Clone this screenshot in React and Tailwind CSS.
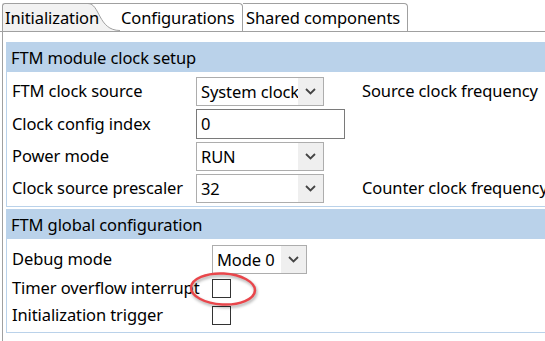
import React from 'react';

const font = { fontFamily: '"Noto Sans", "Open Sans", sans-serif' };

function Chevron() {
  return (
    <svg width="11" height="7" viewBox="0 0 11 7" fill="none">
      <path d="M1 1l4.5 4.5L10 1" stroke="#444" strokeWidth="1.8" />
    </svg>
  );
}

function Combo({ value, width }) {
  return (
    <div className={`flex h-[29px] border border-[#adadad] bg-white ${width}`}>
      <div className="flex-1 overflow-hidden whitespace-nowrap pl-[4px] leading-[27px]">{value}</div>
      <div className="flex w-[25px] items-center justify-center bg-[#efefef]">
        <Chevron />
      </div>
    </div>
  );
}

function Checkbox() {
  return <div className="h-[19px] w-[19px] border border-[#333] bg-white" />;
}

function SectionHeader({ children }) {
  return <div className="h-[29px] bg-[#bad2ea] pl-[4px] leading-[29px]">{children}</div>;
}

export default function App() {
  return (
    <div className="relative h-[341px] w-[545px] overflow-hidden bg-white text-[16.5px] tracking-[-0.1px] text-black" style={font}>
      {/* tab bar */}
      <div className="flex h-[32px] items-end border-b border-[#a0a0a0] pl-[2px]">
        <div className="relative z-10 h-[28px] w-[86px] whitespace-nowrap rounded-tl-[3px] border-l border-t border-[#a0a0a0] bg-[#f2f2f2] pl-[2px] leading-[28px]">
          <span className="relative z-10">Initialization</span>
        </div>
        <svg width="32" height="28" viewBox="0 0 32 28" className="relative z-0 block">
          <path d="M0 0.5 C12 0.5 10 27.5 32 27.5 L0 28 Z" fill="#f2f2f2" />
          <path d="M0 0.5 L32 0.5" stroke="#a0a0a0" />
          <path d="M0 0.5 C12 0.5 10 27.5 32 27.5" stroke="#a0a0a0" fill="none" />
        </svg>
        <div className="h-[28px] w-[123px] whitespace-nowrap rounded-tr-[4px] border-r border-t border-[#a0a0a0] pl-[1px] leading-[28px]">
          Configurations
        </div>
        <div className="h-[28px] w-[165px] whitespace-nowrap rounded-tr-[4px] border-r border-t border-[#a0a0a0] pl-[3px] leading-[28px]">
          Shared components
        </div>
      </div>

      {/* panel */}
      <div className="ml-[2px] h-[320px] border-l border-[#a0a0a0] pl-[3px] pt-[10px]">
        <div className="w-[600px] border border-[#bad2ea] pb-[3px]">
          <SectionHeader>FTM module clock setup</SectionHeader>
          <div className="flex flex-col gap-[3px] pt-[5px]">
            <div className="flex items-center">
              <div className="w-[189px] pl-[5px]">FTM clock source</div>
              <Combo value="System clock" width="w-[128px]" />
              <div className="ml-[38px] whitespace-nowrap">Source clock frequency</div>
            </div>
            <div className="flex items-center">
              <div className="w-[189px] pl-[5px]">Clock config index</div>
              <div className="h-[30px] w-[149px] border border-[#7a7a7a] bg-white pl-[4px] leading-[28px]">0</div>
            </div>
            <div className="flex items-center">
              <div className="w-[189px] pl-[5px]">Power mode</div>
              <Combo value="RUN" width="w-[128px]" />
            </div>
            <div className="flex items-center">
              <div className="w-[189px] whitespace-nowrap pl-[5px]">Clock source prescaler</div>
              <Combo value="32" width="w-[128px]" />
              <div className="ml-[38px] whitespace-nowrap">Counter clock frequency</div>
            </div>
          </div>
        </div>

        <div className="mt-[2px] w-[600px] border border-[#bad2ea] pb-[7px]">
          <SectionHeader>FTM global configuration</SectionHeader>
          <div className="flex flex-col pt-[6px]">
            <div className="flex items-center">
              <div className="w-[205px] pl-[5px]">Debug mode</div>
              <Combo value="Mode 0" width="w-[95px]" />
            </div>
            <div className="mt-[5px] flex h-[19px] items-center">
              <div className="w-[205px] whitespace-nowrap pl-[5px]">Timer overflow interrupt</div>
              <Checkbox />
            </div>
            <div className="mt-[8px] flex h-[19px] items-center">
              <div className="w-[205px] whitespace-nowrap pl-[5px]">Initialization trigger</div>
              <Checkbox />
            </div>
          </div>
        </div>
      </div>

      {/* red annotation ellipse */}
      <svg
        className="absolute left-[186px] top-[268px] drop-shadow-[1px_2px_1.5px_rgba(0,0,0,0.35)]"
        width="74"
        height="44"
        viewBox="0 0 74 44"
        fill="none"
      >
        <ellipse cx="37" cy="21" rx="32" ry="15.5" stroke="#e9464b" strokeWidth="2.5" transform="rotate(3 37 21)" />
      </svg>
    </div>
  );
}
